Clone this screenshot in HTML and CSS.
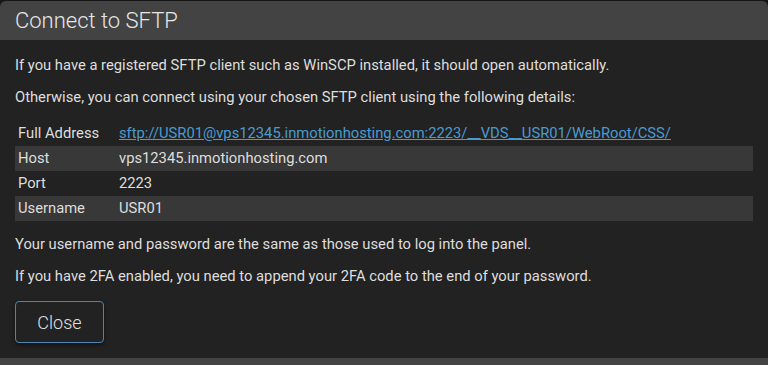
FILE: index.html
```html
<!DOCTYPE html>
<html>
<head>
<meta charset="utf-8">
<link rel="stylesheet" href="styles.css">
</head>
<body>
<div class="dialog">
  <div class="header"><h1 class="title">Connect to SFTP</h1></div>
  <div class="content">
    <p class="text">If you have a registered SFTP client such as WinSCP installed, it should open automatically.</p>
    <p class="text">Otherwise, you can connect using your chosen SFTP client using the following details:</p>
    <table class="details">
      <tr><td class="label">Full Address</td><td class="value"><a class="link" href="#">sftp://USR01@vps12345.inmotionhosting.com:2223/__VDS__USR01/WebRoot/CSS/</a></td></tr>
      <tr class="alt"><td class="label">Host</td><td class="value">vps12345.inmotionhosting.com</td></tr>
      <tr><td class="label">Port</td><td class="value">2223</td></tr>
      <tr class="alt"><td class="label">Username</td><td class="value">USR01</td></tr>
    </table>
    <p class="text">Your username and password are the same as those used to log into the panel.</p>
    <p class="text">If you have 2FA enabled, you need to append your 2FA code to the end of your password.</p>
    <button class="btn">Close</button>
  </div>
  <div class="footer"></div>
</div>
</body>
</html>
```
FILE: styles.css
```css
html, body {
  margin: 0;
  padding: 0;
  background: #161616;
  font-family: Roboto, "Liberation Sans", sans-serif;
  color: #dedede;
}
.dialog {
  margin-top: 1px;
  border-radius: 6px 6px 0 0;
  overflow: hidden;
  background: #222222;
}
.header {
  background: #434343;
  height: 39px;
  padding: 0 15px;
  display: flex;
  align-items: center;
}
.title {
  margin: 0;
  font-weight: 300;
  font-size: 22px;
  color: #e6e6e6;
}
.content {
  padding: 15px 15px 15px;
}
.text {
  margin: 0 0 12px;
  font-size: 14.75px;
  line-height: 20px;
}
.details {
  width: 100%;
  border-collapse: collapse;
  margin: 14px 0 13px;
  font-size: 14.75px;
}
.details td {
  height: 25px;
  padding: 0 3px;
  line-height: 25px;
}
.details .label {
  width: 95px;
}
.details .alt {
  background: #383838;
}
.link {
  color: #4b9bd1;
  text-decoration: underline;
}
.btn {
  margin-top: 15px;
  display: block;
  width: 89px;
  height: 42px;
  background: #222222;
  color: #e0e0e0;
  border: 1px solid #4a86b4;
  border-radius: 4px;
  font-family: Roboto, "Liberation Sans", sans-serif;
  font-weight: 300;
  font-size: 18px;
  box-shadow: 0 2px 4px rgba(0,0,0,0.5);
}
.footer {
  height: 10px;
  background: #434343;
}
```
